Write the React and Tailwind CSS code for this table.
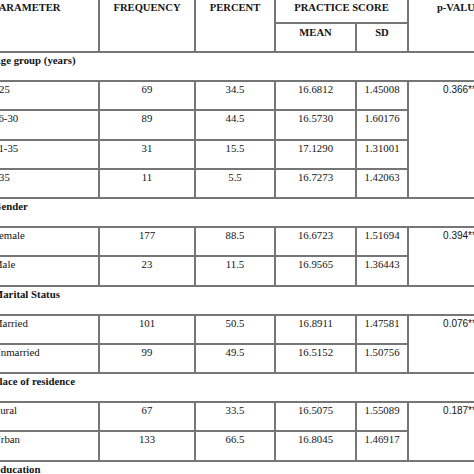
import React from "react";

const groups = [
  {
    title: "Age group (years)",
    p: "0.366**",
    rows: [
      ["<25", "69", "34.5", "16.6812", "1.45008"],
      ["26-30", "89", "44.5", "16.5730", "1.60176"],
      ["31-35", "31", "15.5", "17.1290", "1.31001"],
      [">35", "11", "5.5", "16.7273", "1.42063"],
    ],
  },
  {
    title: "Gender",
    p: "0.394**",
    rows: [
      ["Female", "177", "88.5", "16.6723", "1.51694"],
      ["Male", "23", "11.5", "16.9565", "1.36443"],
    ],
  },
  {
    title: "Marital Status",
    p: "0.076**",
    rows: [
      ["Married", "101", "50.5", "16.8911", "1.47581"],
      ["Unmarried", "99", "49.5", "16.5152", "1.50756"],
    ],
  },
  {
    title: "Place of residence",
    p: "0.187**",
    rows: [
      ["Rural", "67", "33.5", "16.5075", "1.55089"],
      ["Urban", "133", "66.5", "16.8045", "1.46917"],
    ],
  },
  {
    title: "Education",
    p: "0.210**",
    rows: [
      ["Primary", "40", "20.0", "16.6000", "1.50000"],
    ],
  },
];

function Group({ g }) {
  return (
    <>
      <div className="h-[29.2px] border-b-2 border-[#767676] pl-[5px] font-bold text-[10.8px] leading-[13px] pt-[1px]">
        {g.title}
      </div>
      <div className="flex">
        <div className="flex flex-col">
          {g.rows.map((r, i) => (
            <div key={i} className="flex h-[29.2px] border-b-2 border-[#767676] text-[10.8px] leading-[13px]">
              <div className="w-[112px] border-r-2 border-[#767676] pl-[5px] pt-[1px]">{r[0]}</div>
              <div className="w-[96px] border-r-2 border-[#767676] text-center pt-[1px]">{r[1]}</div>
              <div className="w-[80px] border-r-2 border-[#767676] text-center pt-[1px]">{r[2]}</div>
              <div className="w-[81px] border-r-2 border-[#767676] text-center pt-[1px]">{r[3]}</div>
              <div className="w-[52px] border-r-2 border-[#767676] text-center pt-[1px]">{r[4]}</div>
            </div>
          ))}
        </div>
        <div className="w-[101px] border-b-2 border-[#767676] text-center pt-[1px] text-[10px] leading-[13px] font-['Liberation_Sans',Arial,sans-serif]">
          {g.p}
        </div>
      </div>
    </>
  );
}

export default function App() {
  return (
    <div className="w-[474px] h-[474px] overflow-hidden bg-white text-[#141414] font-['Liberation_Serif','Times_New_Roman',serif]">
      <div className="ml-[-12px] w-[522px]">
        <div className="flex h-[53px] border-b-2 border-[#767676] font-bold text-[10.6px] leading-[13px]">
          <div className="w-[112px] border-r-2 border-[#767676] pl-[5px] pt-[1px]">PARAMETER</div>
          <div className="w-[96px] border-r-2 border-[#767676] text-center pt-[1px]">FREQUENCY</div>
          <div className="w-[80px] border-r-2 border-[#767676] text-center pt-[1px]">PERCENT</div>
          <div className="w-[133px] border-r-2 border-[#767676] flex flex-col">
            <div className="h-[24px] border-b-2 border-[#767676] text-center pt-[1px]">PRACTICE SCORE</div>
            <div className="flex flex-1">
              <div className="w-[81px] border-r-2 border-[#767676] text-center pt-[2px]">MEAN</div>
              <div className="flex-1 text-center pt-[2px]">SD</div>
            </div>
          </div>
          <div className="w-[101px] text-center pt-[1px]">p-VALUE</div>
        </div>
        {groups.map((g, i) => (
          <Group key={i} g={g} />
        ))}
      </div>
    </div>
  );
}
